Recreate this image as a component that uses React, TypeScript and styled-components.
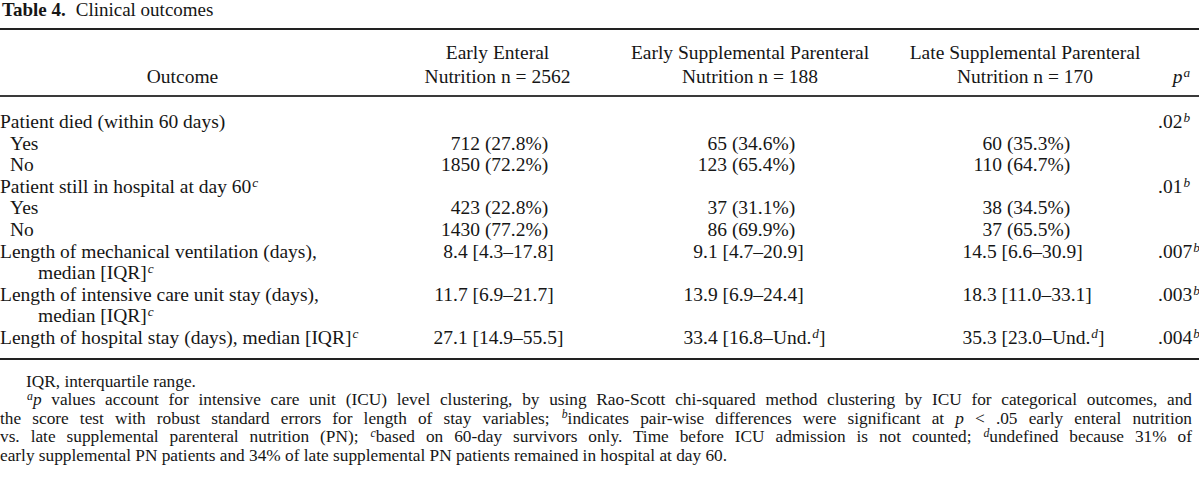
import React from 'react';
import styled, { createGlobalStyle } from 'styled-components';

const GlobalStyle = createGlobalStyle`
  html, body {
    margin: 0;
    padding: 0;
    background: #ffffff;
  }

  body {
    font-family: "Liberation Serif", "Times New Roman", serif;
    color: #161616;
  }
`;

const Page = styled.div`
  width: 1199px;
  height: 486px;
  overflow: hidden;
  background: #ffffff;
`;

const Caption = styled.div`
  font-size: 19px;
  line-height: 20px;
  padding-left: 2px;

  b {
    font-weight: 700;
    margin-right: 10px;
  }
`;

const Table = styled.table`
  width: 100%;
  margin-top: 8px;
  border-collapse: separate;
  border-spacing: 0;
  table-layout: fixed;
  font-size: 19.5px;
`;

const HeadCell = styled.th<{ $align?: 'left' | 'center' | 'right'; $padLeft?: number; $padRight?: number }>`
  font-weight: 400;
  line-height: 24px;
  vertical-align: bottom;
  white-space: nowrap;
  text-align: ${(p) => p.$align ?? 'center'};
  padding: 11px ${(p) => p.$padRight ?? 0}px 6px ${(p) => p.$padLeft ?? 0}px;
  border-top: 2px solid #222;
  border-bottom: 2px solid #3a3a3a;
`;

const Cell = styled.td`
  padding: 0;
  line-height: 21.6px;
  vertical-align: top;
  white-space: nowrap;

  tr:first-child > & {
    padding-top: 14px;
  }

  tr:last-child > & {
    padding-bottom: 9px;
    border-bottom: 2px solid #222;
  }
`;

const Label = styled.div<{ $sub?: boolean }>`
  padding-left: ${(p) => (p.$sub ? 10 : 0)}px;
`;

const Continued = styled.div`
  padding-left: 38px;
`;

const Figure = styled.div`
  display: flex;
`;

const Lead = styled.span<{ $w: number }>`
  flex: none;
  width: ${(p) => p.$w}px;
  text-align: right;
`;

const Tail = styled.span`
  white-space: pre;
`;

const PValue = styled.div`
  text-align: left;
`;

const Sup = styled.span`
  position: relative;
  top: -0.45em;
  font-size: 0.68em;
  line-height: 0;
  font-style: italic;
  margin-left: 1px;
`;

const Notes = styled.div`
  margin-top: 13px;
  padding-right: 7px;
  font-size: 17.3px;
  line-height: 18.5px;
`;

const NoteLine = styled.div<{ $indent?: boolean; $justify?: boolean }>`
  text-indent: ${(p) => (p.$indent ? 26 : 0)}px;
  text-align: ${(p) => (p.$justify ? 'justify' : 'left')};
  text-align-last: ${(p) => (p.$justify ? 'justify' : 'auto')};
`;

type Kind = 'pct' | 'iqr';

// lead widths per data column, so numbers line up on the count / first decimal
const leads: Record<Kind, number>[] = [
  { pct: 115, iqr: 88 },
  { pct: 97, iqr: 73 },
  { pct: 132, iqr: 112 },
];

type Value = [string, React.ReactNode];

interface Row {
  label: React.ReactNode;
  sub?: boolean;
  cont?: React.ReactNode;
  kind?: Kind;
  vals?: [Value, Value, Value];
  p?: React.ReactNode;
}

const und = (
  <>
    Und.<Sup>d</Sup>]
  </>
);

const rows: Row[] = [
  { label: 'Patient died (within 60 days)', p: <>.02<Sup>b</Sup></> },
  { label: 'Yes', sub: true, kind: 'pct', vals: [['712', ' (27.8%)'], ['65', ' (34.6%)'], ['60', ' (35.3%)']] },
  { label: 'No', sub: true, kind: 'pct', vals: [['1850', ' (72.2%)'], ['123', ' (65.4%)'], ['110', ' (64.7%)']] },
  { label: <>Patient still in hospital at day 60<Sup>c</Sup></>, p: <>.01<Sup>b</Sup></> },
  { label: 'Yes', sub: true, kind: 'pct', vals: [['423', ' (22.8%)'], ['37', ' (31.1%)'], ['38', ' (34.5%)']] },
  { label: 'No', sub: true, kind: 'pct', vals: [['1430', ' (77.2%)'], ['86', ' (69.9%)'], ['37', ' (65.5%)']] },
  {
    label: 'Length of mechanical ventilation (days),',
    cont: <>median [IQR]<Sup>c</Sup></>,
    kind: 'iqr',
    vals: [['8', '.4 [4.3–17.8]'], ['9', '.1 [4.7–20.9]'], ['14', '.5 [6.6–30.9]']],
    p: <>.007<Sup>b</Sup></>,
  },
  {
    label: 'Length of intensive care unit stay (days),',
    cont: <>median [IQR]<Sup>c</Sup></>,
    kind: 'iqr',
    vals: [['11', '.7 [6.9–21.7]'], ['13', '.9 [6.9–24.4]'], ['18', '.3 [11.0–33.1]']],
    p: <>.003<Sup>b</Sup></>,
  },
  {
    label: <>Length of hospital stay (days), median [IQR]<Sup>c</Sup></>,
    kind: 'iqr',
    vals: [['27', '.1 [14.9–55.5]'], ['33', <>.4 [16.8–{und}</>], ['35', <>.3 [23.0–{und}</>]],
    p: <>.004<Sup>b</Sup></>,
  },
];

const App: React.FC = () => {
  return (
    <Page>
      <GlobalStyle />
      <Caption>
        <b>Table 4.</b>Clinical outcomes
      </Caption>

      <Table>
        <colgroup>
          <col style={{ width: 365 }} />
          <col style={{ width: 265 }} />
          <col style={{ width: 240 }} />
          <col style={{ width: 288 }} />
          <col style={{ width: 41 }} />
        </colgroup>
        <thead>
          <tr>
            <HeadCell>Outcome</HeadCell>
            <HeadCell>
              Early Enteral
              <br />
              Nutrition n = 2562
            </HeadCell>
            <HeadCell>
              Early Supplemental Parenteral
              <br />
              Nutrition n = 188
            </HeadCell>
            <HeadCell $padLeft={22}>
              Late Supplemental Parenteral
              <br />
              Nutrition n = 170
            </HeadCell>
            <HeadCell $align="right" $padRight={9}>
              <i>p</i>
              <Sup>a</Sup>
            </HeadCell>
          </tr>
        </thead>
        <tbody>
          {rows.map((row, i) => (
            <tr key={i}>
              <Cell>
                <Label $sub={row.sub}>{row.label}</Label>
                {row.cont && <Continued>{row.cont}</Continued>}
              </Cell>
              {[0, 1, 2].map((c) => (
                <Cell key={c}>
                  {row.vals && row.kind && (
                    <Figure>
                      <Lead $w={leads[c][row.kind]}>{row.vals[c][0]}</Lead>
                      <Tail>{row.vals[c][1]}</Tail>
                    </Figure>
                  )}
                </Cell>
              ))}
              <Cell>
                <PValue>{row.p}</PValue>
              </Cell>
            </tr>
          ))}
        </tbody>
      </Table>

      <Notes>
        <NoteLine $indent>IQR, interquartile range.</NoteLine>
        <NoteLine $indent $justify>
          <Sup>a</Sup>
          <i>p</i> values account for intensive care unit (ICU) level clustering, by using Rao-Scott chi-squared method
          clustering by ICU for categorical outcomes, and
        </NoteLine>
        <NoteLine $justify>
          the score test with robust standard errors for length of stay variables; <Sup>b</Sup>indicates pair-wise
          differences were significant at <i>p</i> &lt; .05 early enteral nutrition
        </NoteLine>
        <NoteLine $justify>
          vs. late supplemental parenteral nutrition (PN); <Sup>c</Sup>based on 60-day survivors only. Time before ICU
          admission is not counted; <Sup>d</Sup>undefined because 31% of
        </NoteLine>
        <NoteLine>
          early supplemental PN patients and 34% of late supplemental PN patients remained in hospital at day 60.
        </NoteLine>
      </Notes>
    </Page>
  );
};

export default App;
